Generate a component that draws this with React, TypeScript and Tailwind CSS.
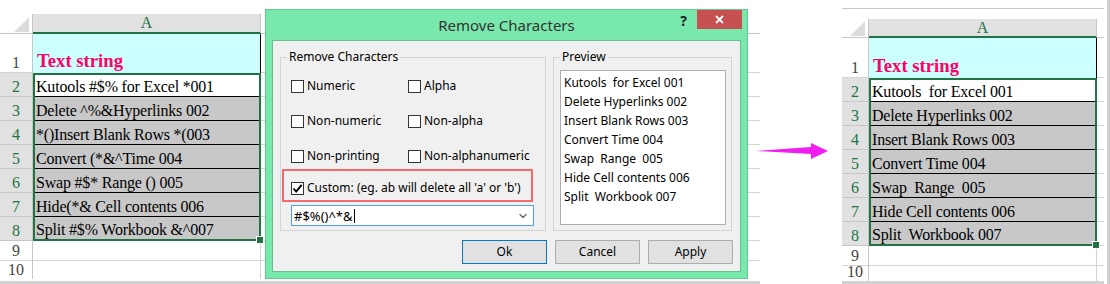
import { ChevronDown } from "lucide-react";

const before = [
  "Kutools #$% for Excel *001",
  "Delete ^%&Hyperlinks 002",
  "*()Insert Blank Rows *(003",
  "Convert (*&^Time 004",
  "Swap #$* Range () 005",
  "Hide(*& Cell contents 006",
  "Split #$% Workbook &^007",
];

const after = [
  "Kutools  for Excel 001",
  "Delete Hyperlinks 002",
  "Insert Blank Rows 003",
  "Convert Time 004",
  "Swap  Range  005",
  "Hide Cell contents 006",
  "Split  Workbook 007",
];

type SheetProps = {
  rows: string[];
  headW: string;
  colW: string;
  headerH: string;
  row1H: string;
  row9H: string;
  row10H: string;
};

const Sheet = ({ rows, headW, colW, headerH, row1H, row9H, row10H }: SheetProps) => {
  return (
    <div className="flex font-['Liberation_Serif',serif] text-[16px] leading-[18px] text-black">
      {/* row numbers */}
      <div className={`${headW} flex flex-col border-r border-[#c6c6c6] text-center`}>
        <div className={`${headerH} flex items-end justify-end pr-[3px] pb-[1px] border-b border-[#c6c6c6]`}>
          <svg width="15" height="15" viewBox="0 0 15 15">
            <polygon points="15,0 15,15 0,15" fill="#dcdcdc" />
          </svg>
        </div>
        <div className={`${row1H} flex items-end justify-center border-b border-[#d4d4d4] text-[#444]`}>1</div>
        {rows.map((_, i) => (
          <div
            key={i}
            className="h-[24px] flex items-end justify-center bg-[#e1e1e1] border-b border-[#c6c6c6] text-[#217346]"
          >
            {i + 2}
          </div>
        ))}
        <div className={`${row9H} flex items-end justify-center border-b border-[#d4d4d4] text-[#444]`}>9</div>
        <div className={`${row10H} flex items-end justify-center text-[#444]`}>10</div>
      </div>

      {/* column A */}
      <div className={`${colW} flex flex-col`}>
        <div
          className={`${headerH} flex items-center justify-center bg-[#e1e1e1] border-b-2 border-b-[#217346] border-r border-r-[#c6c6c6] text-[#217346]`}
        >
          A
        </div>
        <div
          className={`${row1H} flex items-end pl-[4px] pb-[1px] bg-[#ccffff] border-r border-black font-bold text-[18.7px] leading-[22px] text-[#ff0066]`}
        >
          Text string
        </div>
        <div className="relative border-2 border-[#217346]">
          {rows.map((t, i) => (
            <div
              key={i}
              className={`flex items-end pl-[1px] whitespace-pre tracking-[-0.2px] ${
                i === 0 ? "h-[22px] bg-white" : i === rows.length - 1 ? "h-[22px] bg-[#c8c8c8]" : "h-[24px] bg-[#c8c8c8]"
              } ${i < rows.length - 1 ? "border-b border-black" : ""}`}
            >
              {t}
            </div>
          ))}
          <div className="absolute -right-[5px] -bottom-[5px] w-[8px] h-[8px] bg-[#217346] border border-white" />
        </div>
        <div className={`${row9H} border-b border-r border-[#d4d4d4]`} />
        <div className={`${row10H} border-r border-[#d4d4d4]`} />
      </div>

      {/* column B */}
      <div className="flex-1 flex flex-col">
        <div className={`${headerH} border-b border-[#c6c6c6]`} />
        <div className={`${row1H} border-b border-[#d4d4d4]`} />
        {rows.map((_, i) => (
          <div key={i} className="h-[24px] border-b border-[#d4d4d4]" />
        ))}
        <div className={`${row9H} border-b border-[#d4d4d4]`} />
        <div className={row10H} />
      </div>
    </div>
  );
};

const Check = ({ label, checked = false }: { label: string; checked?: boolean }) => (
  <div className="flex items-center gap-[3px] h-[14px]">
    <div className="w-[13px] h-[13px] border border-[#333] bg-white flex items-center justify-center">
      {checked && (
        <svg width="11" height="11" viewBox="0 0 11 11">
          <polyline points="1.5,5.5 4.2,8.6 9.6,1.8" fill="none" stroke="#000" strokeWidth="1.9" />
        </svg>
      )}
    </div>
    <span className="leading-[14px] text-[#000]">{label}</span>
  </div>
);

const Row = ({ a, b }: { a: string; b: string }) => (
  <div className="flex mt-[21px] first:mt-[20px]">
    <div className="w-[117px]">
      <Check label={a} />
    </div>
    <Check label={b} />
  </div>
);

const Dialog = () => (
  <div className="absolute left-[265px] top-[9px] w-[483px] h-[270px] flex flex-col bg-[#78e8ad] border border-[#63c693] font-['Noto_Sans',sans-serif] text-[12px]">
    <div className="h-[30px] grid grid-cols-[1fr_auto_1fr]">
      <div />
      <div className="flex items-center text-[15px] text-[#333]">Remove Characters</div>
      <div className="flex justify-end items-start pr-[5px]">
        <span className="mt-[3px] mr-[10px] font-bold text-[14px] leading-[16px] text-[#222]">?</span>
        <div className="w-[45px] h-[19px] bg-[#c75050] flex items-center justify-center">
          <svg width="9" height="9" viewBox="0 0 9 9">
            <path d="M1 1 L8 8 M8 1 L1 8" stroke="#fff" strokeWidth="1.8" />
          </svg>
        </div>
      </div>
    </div>

    <div className="mx-[6px] h-[232px] bg-[#f0f0f0] border border-[#62bf8f] flex flex-col pt-[16px] px-[7px]">
      <div className="flex gap-[7px]">
        {/* remove characters group */}
        <div className="relative w-[266px] h-[174px] border border-[#d5d5d5] flex flex-col pl-[10px]">
          <span className="absolute -top-[9px] left-[6px] px-[2px] bg-[#f0f0f0] leading-[16px] text-[#000]">
            Remove Characters
          </span>
          <Row a="Numeric" b="Alpha" />
          <Row a="Non-numeric" b="Non-alpha" />
          <Row a="Non-printing" b="Non-alphanumeric" />
          <div className="mt-[6px] -ml-[9px] w-[251px] h-[33px] border-2 border-[#f36b6b] flex items-center pl-[7px] pt-[5px]">
            <Check label="Custom: (eg. ab will delete all 'a' or 'b')" checked />
          </div>
          <div className="mt-[3px] w-[243px] h-[21px] bg-white border border-[#569de5] flex items-center justify-between pl-[2px] pr-[4px]">
            <span className="flex items-center text-[13px] leading-[14px]">
              #$%()^*&amp;
              <span className="ml-[1px] h-[14px] border-l border-black" />
            </span>
            <ChevronDown size={12} strokeWidth={2.5} color="#666" />
          </div>
        </div>

        {/* preview group */}
        <div className="relative w-[179px] h-[174px] border border-[#d5d5d5] pl-[6px] pt-[12px]">
          <span className="absolute -top-[9px] left-[6px] px-[2px] bg-[#f0f0f0] leading-[16px] text-[#000]">
            Preview
          </span>
          <div className="w-[166px] h-[155px] bg-white border border-[#adadad] pl-[3px] pt-[2px]">
            {after.map((t) => (
              <div key={t} className="leading-[19px] whitespace-pre text-[#000]">
                {t}
              </div>
            ))}
          </div>
        </div>
      </div>

      <div className="mt-[9px] flex justify-end gap-[8px]">
        <button className="w-[85px] h-[24px] bg-[#e1e1e1] border border-[#0078d7] text-[#000]">Ok</button>
        <button className="w-[85px] h-[24px] bg-[#e1e1e1] border border-[#adadad] text-[#000]">Cancel</button>
        <button className="w-[85px] h-[24px] bg-[#e1e1e1] border border-[#adadad] text-[#000]">Apply</button>
      </div>
    </div>
  </div>
);

export default function App() {
  return (
    <div className="w-[1110px] h-[284px] bg-white flex overflow-hidden">
      <div className="relative w-[760px] h-full pt-[14px] border-b-[3px] border-[#d2d2d2]">
        <Sheet
          rows={before}
          headW="w-[33px]"
          colW="w-[228px]"
          headerH="h-[20px]"
          row1H="h-[39px]"
          row9H="h-[20px]"
          row10H="h-[18px]"
        />
        <Dialog />
      </div>

      <div className="w-[82px] pt-[143px]">
        <svg width="72" height="16" viewBox="0 0 72 16" className="-ml-[4px]">
          <polygon points="0,8 55,4 55,0 72,8 55,16 55,11" fill="#f01ef0" />
        </svg>
      </div>

      <div className="flex-1 h-full border-r-[3px] border-[#cfcfcf] pr-[3px]">
        <div className="mt-[8px] pt-[10px] border-t border-b-[3px] border-[#d2d2d2] border-t-[#c8c8c8] h-[276px] overflow-hidden">
          <Sheet
            rows={after}
            headW="w-[27px]"
            colW="w-[228px]"
            headerH="h-[19px]"
            row1H="h-[40px]"
            row9H="h-[20px]"
            row10H="h-[15px]"
          />
        </div>
      </div>
    </div>
  );
}
